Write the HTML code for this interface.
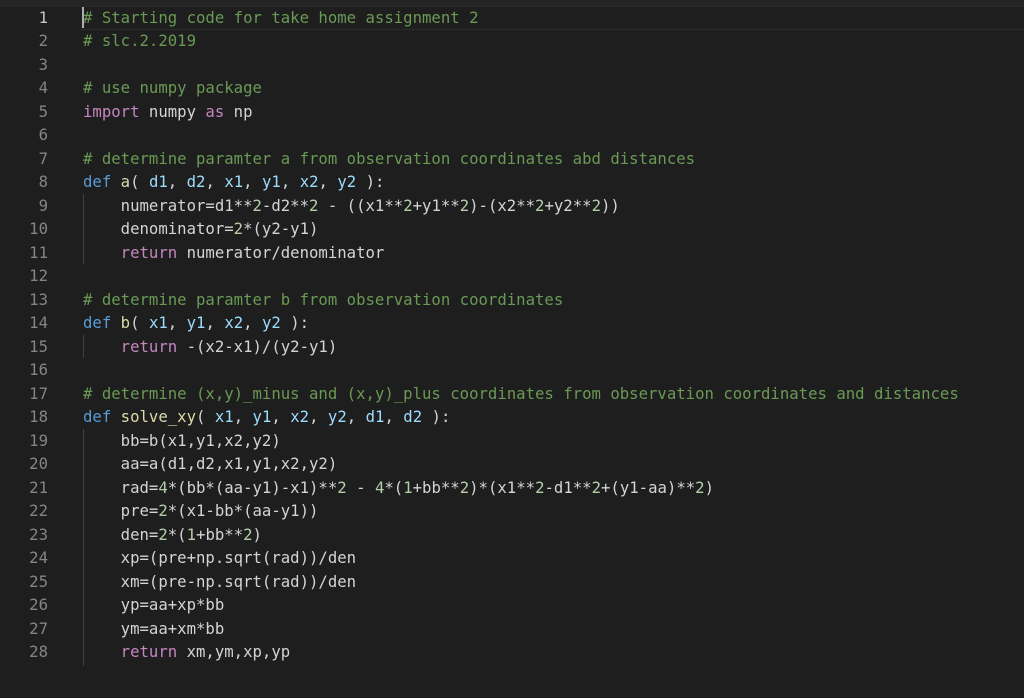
<!DOCTYPE html>
<html><head><meta charset="utf-8"><style>
html,body{margin:0;padding:0;background:#1e1e1e;width:1024px;height:698px;overflow:hidden}
.top{position:absolute;left:0;top:0;width:1024px;height:7px;background:#252526}
.cur{position:absolute;left:80px;top:6px;width:944px;height:22px;border-top:1px solid #2a2a2a;border-bottom:1px solid #2a2a2a}
.caret{position:absolute;left:82px;top:7px;width:2px;height:21px;background:#aeafad}
.ln,.cd{position:absolute;top:6px;font-family:"DejaVu Sans Mono","Liberation Mono",monospace;font-size:15.65px;line-height:23.48px;white-space:pre;color:#d4d4d4}
.ln{left:0;width:48px;text-align:right;color:#858585}
.cd{left:83px}
.g{position:absolute;left:83px;width:1px;background:#404040}
.c{color:#6a9955}.k{color:#c586c0}.d{color:#569cd6}.f{color:#dcdcaa}.p{color:#9cdcfe}.n{color:#b5cea8}
</style></head><body>
<div class="top"></div>
<div class="cur"></div>
<div class="g" style="top:194px;height:70px"></div>
<div class="g" style="top:335px;height:23px"></div>
<div class="g" style="top:429px;height:237px"></div>
<div class="ln"><span style="color:#c6c6c6">1</span>
2
3
4
5
6
7
8
9
10
11
12
13
14
15
16
17
18
19
20
21
22
23
24
25
26
27
28</div>
<div class="cd"><span class="c"># Starting code for take home assignment 2</span>
<span class="c"># slc.2.2019</span>

<span class="c"># use numpy package</span>
<span class="k">import</span> numpy <span class="k">as</span> np

<span class="c"># determine paramter a from observation coordinates abd distances</span>
<span class="d">def</span> <span class="f">a</span>( <span class="p">d1</span>, <span class="p">d2</span>, <span class="p">x1</span>, <span class="p">y1</span>, <span class="p">x2</span>, <span class="p">y2</span> ):
    numerator=d1**<span class="n">2</span>-d2**<span class="n">2</span> - ((x1**<span class="n">2</span>+y1**<span class="n">2</span>)-(x2**<span class="n">2</span>+y2**<span class="n">2</span>))
    denominator=<span class="n">2</span>*(y2-y1)
    <span class="k">return</span> numerator/denominator

<span class="c"># determine paramter b from observation coordinates</span>
<span class="d">def</span> <span class="f">b</span>( <span class="p">x1</span>, <span class="p">y1</span>, <span class="p">x2</span>, <span class="p">y2</span> ):
    <span class="k">return</span> -(x2-x1)/(y2-y1)

<span class="c"># determine (x,y)_minus and (x,y)_plus coordinates from observation coordinates and distances</span>
<span class="d">def</span> <span class="f">solve_xy</span>( <span class="p">x1</span>, <span class="p">y1</span>, <span class="p">x2</span>, <span class="p">y2</span>, <span class="p">d1</span>, <span class="p">d2</span> ):
    bb=b(x1,y1,x2,y2)
    aa=a(d1,d2,x1,y1,x2,y2)
    rad=<span class="n">4</span>*(bb*(aa-y1)-x1)**<span class="n">2</span> - <span class="n">4</span>*(<span class="n">1</span>+bb**<span class="n">2</span>)*(x1**<span class="n">2</span>-d1**<span class="n">2</span>+(y1-aa)**<span class="n">2</span>)
    pre=<span class="n">2</span>*(x1-bb*(aa-y1))
    den=<span class="n">2</span>*(<span class="n">1</span>+bb**<span class="n">2</span>)
    xp=(pre+np.sqrt(rad))/den
    xm=(pre-np.sqrt(rad))/den
    yp=aa+xp*bb
    ym=aa+xm*bb
    <span class="k">return</span> xm,ym,xp,yp</div>
<div class="caret"></div>
</body></html>
